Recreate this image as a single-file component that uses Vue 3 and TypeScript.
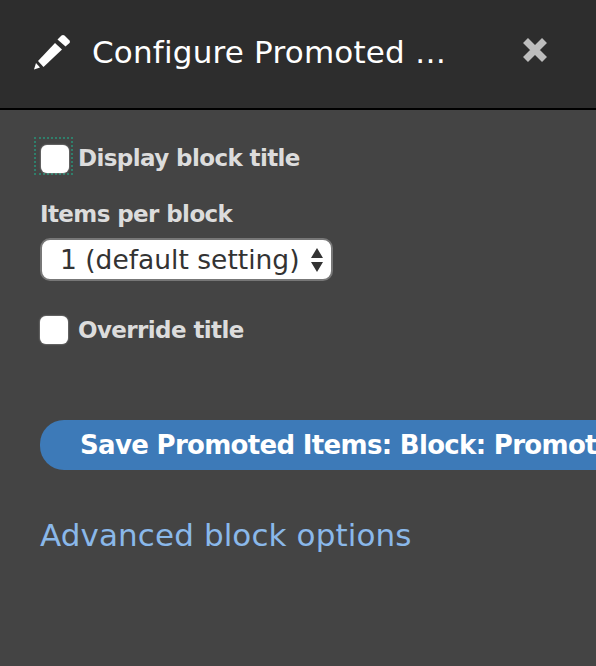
<script setup lang="ts">
const title = 'Configure Promoted …'
</script>

<template>
  <div class="dialog">
    <header class="head">
      <svg class="pencil" viewBox="0 0 38 38" width="38" height="38" aria-hidden="true">
        <path fill="#fff" d="M1 35.500 L7 33.500 L3 29 Z" />
        <path fill="#fff" d="M5 27 L22 9 L29 15.500 L10.500 33 Z" />
        <path fill="#fff" d="M24.500 5.500 L28.500 1.500 Q30 0.500 31.500 1.500 L36.500 6.500 Q37.500 8 36.500 9 L32.500 12.500 Z" />
      </svg>
      <h1 class="title">{{ title }}</h1>
      <svg class="close" viewBox="0 0 26 26" width="26" height="26" aria-hidden="true">
        <path d="M3.500 3.500 L22.500 22.500 M22.500 3.500 L3.500 22.500" stroke="#bdbdbd" stroke-width="7" fill="none" />
      </svg>
    </header>
    <main class="body">
      <label class="check first">
        <span class="focus"><span class="box"></span></span>
        <span class="label">Display block title</span>
      </label>
      <div class="field-label">Items per block</div>
      <div class="select">
        <span class="select-text">1 (default setting)</span>
        <svg class="arrows" viewBox="0 0 12 24" width="12" height="24" aria-hidden="true">
          <path fill="#333" d="M6 0 L12 10 L0 10 Z M0 14 L12 14 L6 24 Z" />
        </svg>
      </div>
      <label class="check second">
        <span class="box"></span>
        <span class="label">Override title</span>
      </label>
      <div class="save"><span class="save-text">Save Promoted Items: Block: Promot</span></div>
      <a class="advanced">Advanced block options</a>
    </main>
  </div>
</template>

<style>
html, body { margin: 0; background: #444; }
</style>

<style scoped>
.dialog {
  width: 596px;
  height: 666px;
  overflow: hidden;
  background: #444;
  font-family: "DejaVu Sans", sans-serif;
  display: flex;
  flex-direction: column;
}
.head {
  height: 110px;
  flex: none;
  box-sizing: border-box;
  background: #2d2d2d;
  border-bottom: 2px solid #000;
  display: flex;
  align-items: center;
  padding: 0 48px 0 33px;
}
.pencil { margin-top: -2px; flex: none; }
.title {
  margin: -4px 0 0 21px;
  flex: 1;
  font-size: 31px;
  font-weight: 400;
  color: #fff;
  white-space: nowrap;
  letter-spacing: 0.2px;
}
.close { flex: none; margin-top: -8px; }
.body { flex: 1; padding: 27px 0 0 40px; }
.check { display: flex; align-items: center; }
.focus {
  width: 39px;
  height: 38px;
  box-sizing: border-box;
  border: 2px dotted #2f7f6b;
  margin-left: -6px;
  padding: 6px 0 0 5px;
  display: flex;
  align-items: flex-start;
}
.box {
  width: 28px;
  height: 28px;
  background: #fff;
  border-radius: 6px;
  box-shadow: 0 0 2px rgba(255, 255, 255, 0.6);
  flex: none;
}
.label, .field-label {
  font-size: 23px;
  font-weight: 700;
  color: #dcdcdc;
  letter-spacing: -0.6px;
}
.first { align-items: center; }
.first .label { margin-left: 5px; padding-top: 3px; }
.second { margin-top: 35px; }
.second .label { margin-left: 10px; }
.field-label { margin-top: 24px; line-height: 30px; }
.select {
  margin-top: 9px;
  width: 293px;
  height: 43px;
  box-sizing: border-box;
  background: #fff;
  border: 2px solid #777;
  border-radius: 10px;
  display: flex;
  align-items: center;
  padding: 0 8px 0 18px;
  justify-content: space-between;
}
.select-text {
  font-size: 26.5px;
  color: #333;
  white-space: nowrap;
}
.save {
  margin-top: 76px;
  width: 556px;
  height: 50px;
  box-sizing: border-box;
  background: #3d7ab8;
  border-radius: 24px 0 0 24px;
  display: flex;
  align-items: center;
  padding-left: 40px;
  overflow: hidden;
}
.save-text {
  font-size: 26px;
  font-weight: 700;
  color: #fff;
  white-space: nowrap;
  letter-spacing: -0.68px;
}
.advanced {
  display: block;
  margin-top: 46px;
  font-size: 31px;
  color: #8ab8ea;
  letter-spacing: 0.1px;
  line-height: 38px;
}
</style>
